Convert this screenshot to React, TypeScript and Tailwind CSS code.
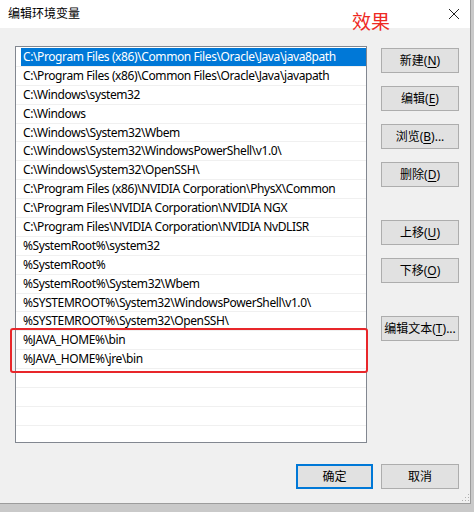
import React from "react";

const rows: string[] = [
  "C:\\Program Files (x86)\\Common Files\\Oracle\\Java\\java8path",
  "C:\\Program Files (x86)\\Common Files\\Oracle\\Java\\javapath",
  "C:\\Windows\\system32",
  "C:\\Windows",
  "C:\\Windows\\System32\\Wbem",
  "C:\\Windows\\System32\\WindowsPowerShell\\v1.0\\",
  "C:\\Windows\\System32\\OpenSSH\\",
  "C:\\Program Files (x86)\\NVIDIA Corporation\\PhysX\\Common",
  "C:\\Program Files\\NVIDIA Corporation\\NVIDIA NGX",
  "C:\\Program Files\\NVIDIA Corporation\\NVIDIA NvDLISR",
  "%SystemRoot%\\system32",
  "%SystemRoot%",
  "%SystemRoot%\\System32\\Wbem",
  "%SYSTEMROOT%\\System32\\WindowsPowerShell\\v1.0\\",
  "%SYSTEMROOT%\\System32\\OpenSSH\\",
  "%JAVA_HOME%\\bin",
  "%JAVA_HOME%\\jre\\bin",
  "",
  "",
  "",
  "",
];

function Btn({ label, accel, suffix, className = "" }: { label: string; accel?: string; suffix?: string; className?: string }) {
  return (
    <div
      className={
        "w-[78px] h-[25px] flex items-center justify-center bg-[#e1e1e1] border border-[#adadad] text-[12px] text-black " +
        className
      }
    >
      <span>{label}</span>
      {accel && (
        <>
          <span>(</span>
          <span className="underline underline-offset-2">{accel}</span>
          <span>){suffix ?? ""}</span>
        </>
      )}
    </div>
  );
}

export default function App() {
  return (
    <div
      className="relative w-[474px] h-[512px] overflow-hidden bg-[#c9c9c9]"
      style={{ fontFamily: '"Noto Sans", "Noto Sans CJK SC", sans-serif' }}
    >
      <div className="w-[471px] h-[504px] bg-[#f0f0f0] border-r border-b border-[#9c9c9c] flex flex-col">
        {/* title bar */}
        <div className="h-[28px] bg-white flex items-center justify-between pl-[8px] pr-[10px] shrink-0">
          <span className="text-[12px] text-black">编辑环境变量</span>
          <svg width="12" height="12" viewBox="0 0 12 12">
            <path d="M1 1 L11 11 M11 1 L1 11" stroke="#222" strokeWidth="1" />
          </svg>
        </div>
        {/* body */}
        <div className="flex flex-col">
          <div className="flex pl-[15px] pt-[18px]">
            <div className="w-[352px] h-[397px] bg-white border border-[#828790] pt-[1px] overflow-hidden">
              {rows.map((r, i) => (
                <div key={i} className="h-[18.9px] border-b border-[#f0f0f0] pl-[5px]">
                  <div
                    className={
                      "h-full flex items-center pl-[2px] text-[12px] tracking-[-0.4px] whitespace-nowrap " +
                      (i === 0 ? "bg-[#0078d7] text-white" : "text-black")
                    }
                  >
                    {r}
                  </div>
                </div>
              ))}
            </div>
            <div className="flex flex-col ml-[14px] pt-[2px]">
              <Btn label="新建" accel="N" />
              <Btn label="编辑" accel="E" className="mt-[13px]" />
              <Btn label="浏览" accel="B" suffix="..." className="mt-[13px]" />
              <Btn label="删除" accel="D" className="mt-[13px]" />
              <Btn label="上移" accel="U" className="mt-[33px]" />
              <Btn label="下移" accel="O" className="mt-[13px]" />
              <Btn label="编辑文本" accel="T" suffix="..." className="mt-[33px]" />
            </div>
          </div>
          <div className="flex pl-[296px] mt-[21px] gap-[8px]">
            <Btn label="确定" className="!w-[77px] !border-2 !border-[#0078d7]" />
            <Btn label="取消" />
          </div>
        </div>
      </div>
      {/* resize grip */}
      <svg className="absolute left-[462px] top-[494px]" width="8" height="8" viewBox="0 0 8 8">
        <rect x="6" y="0" width="1" height="1" fill="#b0b0b0" />
        <rect x="3" y="3" width="1" height="1" fill="#b0b0b0" />
        <rect x="6" y="3" width="1" height="1" fill="#b0b0b0" />
        <rect x="0" y="6" width="1" height="1" fill="#b0b0b0" />
        <rect x="3" y="6" width="1" height="1" fill="#b0b0b0" />
        <rect x="6" y="6" width="1" height="1" fill="#b0b0b0" />
      </svg>
      {/* annotations */}
      <div className="absolute left-[352px] top-[9px] text-[19px] leading-[26px] text-[#ee2a24]">效果</div>
      <div className="absolute left-[10px] top-[328px] w-[358px] h-[45px] border-2 border-[#e8262a] rounded-[3px]" />
    </div>
  );
}
